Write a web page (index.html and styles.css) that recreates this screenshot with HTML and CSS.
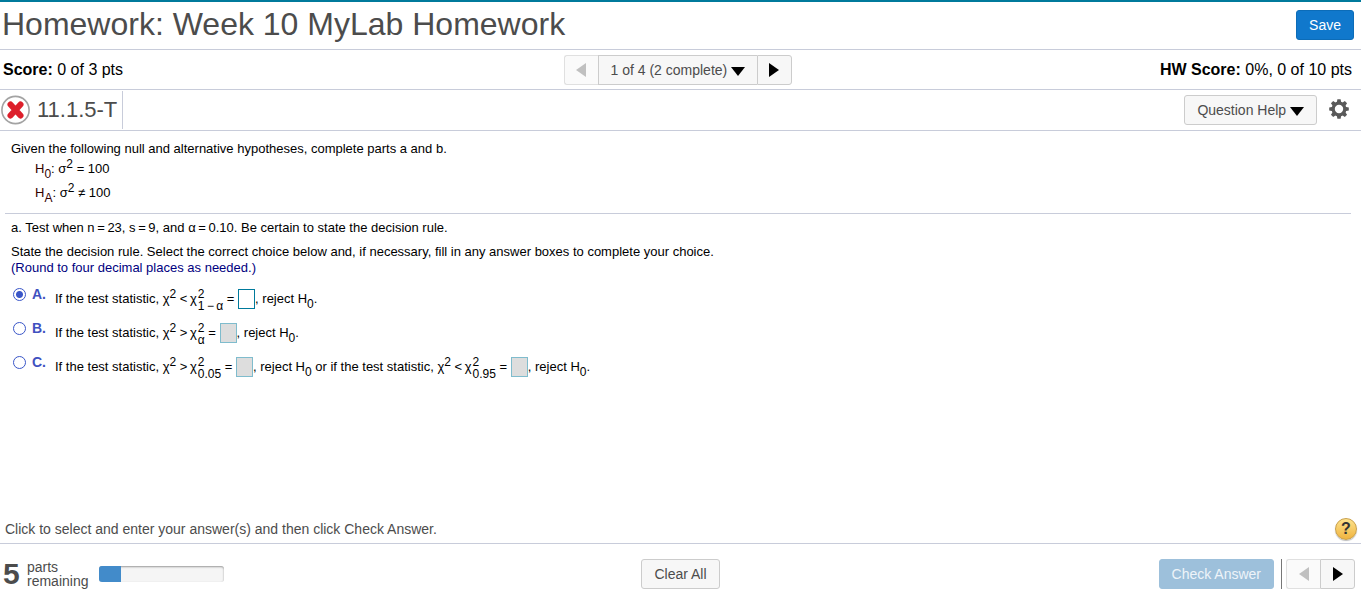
FILE: index.html
```html
<!DOCTYPE html>
<html lang="en">
<head>
<meta charset="utf-8">
<title>Homework: Week 10 MyLab Homework</title>
<link rel="stylesheet" href="styles.css">
</head>

<body>
<header class="title-bar">
  <h1>Homework: Week 10 MyLab Homework</h1>
  <button type="button" class="btn btn-primary">Save</button>
</header>

<div class="score-bar">
  <div><b>Score:</b> 0 of 3 pts</div>
  <nav class="btn-group">
    <button type="button" class="btn arrow" aria-label="Previous question" disabled>
      <svg width="10" height="14" viewBox="0 0 10 14"><path d="M10 0v14L0 7z"/></svg>
    </button>
    <span class="picker">
      <select class="btn" aria-label="Question">
        <option>1 of 4 (2 complete)</option>
      </select>
      <svg class="caret" width="14" height="9" viewBox="0 0 14 9"><path d="M0 0h14L7 9z"/></svg>
    </span>
    <button type="button" class="btn arrow" aria-label="Next question">
      <svg width="10" height="14" viewBox="0 0 10 14"><path d="M0 0v14l10-7z"/></svg>
    </button>
  </nav>
  <div class="hw-score"><b>HW Score:</b> 0%, 0 of 10 pts</div>
</div>

<div class="question-bar">
  <h2>
    <svg width="30" height="30" viewBox="0 0 30 30" role="img" aria-label="Incorrect">
      <circle cx="15.5" cy="15" r="13.6" fill="#fff" stroke="#a3a3a3" stroke-width="1.6"/>
      <path d="M10.5 9.5l10 11M20.5 9.5l-10 11" fill="none" stroke="#dd1f2b" stroke-width="6" stroke-linecap="round"/>
    </svg>
    11.1.5-T
  </h2>
  <div class="tools">
    <button type="button" class="btn">Question Help
      <svg width="14" height="9" viewBox="0 0 14 9"><path d="M0 0h14L7 9z"/></svg>
    </button>
    <button type="button" class="icon-btn" aria-label="Settings">
      <svg width="20" height="20" viewBox="-10 -10 20 20">
        <g fill="#5a5a5a">
          <path id="tooth" d="M-2.3-6L-1.6-9.8h3.2L2.3-6z"/>
          <use href="#tooth" transform="rotate(45)"/>
          <use href="#tooth" transform="rotate(90)"/>
          <use href="#tooth" transform="rotate(135)"/>
          <use href="#tooth" transform="rotate(180)"/>
          <use href="#tooth" transform="rotate(225)"/>
          <use href="#tooth" transform="rotate(270)"/>
          <use href="#tooth" transform="rotate(315)"/>
        </g>
        <circle r="5.8" fill="none" stroke="#5a5a5a" stroke-width="3.2"/>
      </svg>
    </button>
  </div>
</div>

<main>
  <section class="problem">
    <p>Given the following null and alternative hypotheses, complete parts a and b.</p>
    <p class="hypothesis"><span class="var">H<sub>0</sub></span>: σ<sup>2</sup> = 100</p>
    <p class="hypothesis"><span class="var">H<sub>A</sub></span>: σ<sup>2</sup> ≠ 100</p>
  </section>

  <section class="part">
    <p>a. Test when n&#8201;=&#8201;23, s&#8201;=&#8201;9, and α&#8201;=&#8201;0.10. Be certain to state the decision rule.</p>
    <p class="prompt">State the decision rule. Select the correct choice below and, if necessary, fill in any answer boxes to complete your choice.<br>
    <span class="note">(Round to four decimal places as needed.)</span></p>

    <div class="choice">
      <input type="radio" name="choice" id="choice-a" checked>
      <label for="choice-a">A.</label>
      <p>If the test statistic, χ<sup>2</sup> &lt;&#8201;χ<span class="scripts"><span>2</span><span>1&#8201;−&#8201;α</span></span> = <input type="text" class="answer" aria-label="Critical value">, reject H<sub>0</sub>.</p>
    </div>
    <div class="choice">
      <input type="radio" name="choice" id="choice-b">
      <label for="choice-b">B.</label>
      <p>If the test statistic, χ<sup>2</sup> &gt;&#8201;χ<span class="scripts"><span>2</span><span>α</span></span> = <input type="text" class="answer" aria-label="Critical value" disabled>, reject H<sub>0</sub>.</p>
    </div>
    <div class="choice">
      <input type="radio" name="choice" id="choice-c">
      <label for="choice-c">C.</label>
      <p>If the test statistic, χ<sup>2</sup> &gt;&#8201;χ<span class="scripts"><span>2</span><span>0.05</span></span> = <input type="text" class="answer" aria-label="Upper critical value" disabled>, reject H<sub>0</sub> or if the test statistic, χ<sup>2</sup> &lt;&#8201;χ<span class="scripts"><span>2</span><span>0.95</span></span> = <input type="text" class="answer" aria-label="Lower critical value" disabled>, reject H<sub>0</sub>.</p>
    </div>
  </section>
</main>

<div class="hint">
  <span>Click to select and enter your answer(s) and then click Check Answer.</span>
  <button type="button" class="help">?</button>
</div>

<footer>
  <div class="remaining">
    <b>5</b>
    <span id="parts">parts<br>remaining</span>
    <div class="progress" role="progressbar" aria-labelledby="parts" aria-valuenow="17" aria-valuemin="0" aria-valuemax="100">
      <div class="bar" style="width: 17%"></div>
    </div>
  </div>
  <button type="button" class="btn">Clear All</button>
  <div class="actions">
    <button type="button" class="btn btn-primary" disabled>Check Answer</button>
    <div class="btn-group">
      <button type="button" class="btn arrow" aria-label="Previous part" disabled>
        <svg width="10" height="14" viewBox="0 0 10 14"><path d="M10 0v14L0 7z"/></svg>
      </button>
      <button type="button" class="btn arrow" aria-label="Next part">
        <svg width="10" height="14" viewBox="0 0 10 14"><path d="M0 0v14l10-7z"/></svg>
      </button>
    </div>
  </div>
</footer>
</body>
</html>
```
FILE: styles.css
```css
* {
  box-sizing: border-box;
}

body {
  display: flex;
  flex-direction: column;
  min-height: 100vh;
  margin: 0;
  border-top: 2px solid #007a9c;
  background: #fff;
  color: #000;
  font-family: "Liberation Sans", Arial, sans-serif;
  font-size: 13px;
  line-height: 16px;
}

h1, h2, p {
  margin: 0;
  font-weight: normal;
}

button, select, input {
  font-family: inherit;
}

/* buttons */

.btn {
  height: 30px;
  padding: 0 12px;
  border: 1px solid #ccc;
  border-radius: 3px;
  background: #f7f7f7;
  color: #4c4c4c;
  font-size: 14px;
}

.btn svg {
  fill: #000;
  vertical-align: -1px;
}

.btn-primary {
  border-color: #0c6cb8;
  background: #1078cc;
  color: #fff;
}

.btn-primary:disabled {
  border-color: #9dc0db;
  background: #9dc0db;
  color: #eef4f9;
}

.btn-group {
  display: flex;
}

.btn-group .btn {
  border-radius: 0;
}

.btn-group > :first-child {
  border-radius: 3px 0 0 3px;
  border-right: 0;
}

.btn-group > :last-child {
  border-radius: 0 3px 3px 0;
}

.arrow {
  display: flex;
  align-items: center;
  justify-content: center;
  width: 35px;
  padding: 0;
}

.arrow:disabled {
  width: 34px;
  border-color: #e0e0e0;
  background: #fafafa;
}

.arrow:disabled svg {
  fill: #c0c0c0;
}

.picker {
  position: relative;
}

.picker .btn {
  appearance: none;
  width: 159px;
  border-right: 0;
}

.caret {
  position: absolute;
  top: 12px;
  right: 12px;
  pointer-events: none;
}

/* top bars */

.title-bar {
  display: flex;
  align-items: center;
  justify-content: space-between;
  height: 48px;
  padding: 0 7px 2px 2px;
  border-bottom: 1px solid #c8ccda;
}

.title-bar h1 {
  color: #4c4c4c;
  font-size: 32px;
  line-height: 40px;
  padding-bottom: 2px;
}

.score-bar {
  display: grid;
  grid-template-columns: 1fr auto 1fr;
  align-items: center;
  height: 40px;
  padding: 0 9px 0 3px;
  border-bottom: 1px solid #c8ccda;
  font-size: 16px;
}

.hw-score {
  text-align: right;
}

.question-bar {
  display: flex;
  align-items: center;
  justify-content: space-between;
  height: 41px;
  padding-right: 12px;
  border-bottom: 1px solid #c8ccda;
}

.question-bar h2 {
  display: flex;
  align-items: center;
  gap: 7px;
  height: 38px;
  padding-right: 5px;
  border-right: 1px solid #c8ccda;
  color: #4c4c4c;
  font-size: 22px;
}

.tools {
  display: flex;
  align-items: center;
  gap: 12px;
}

.icon-btn {
  display: flex;
  padding: 0 0 2px;
  border: 0;
  background: none;
}

/* question */

main {
  flex: 1;
  padding: 10px 10px 0 5px;
}

.problem {
  padding: 0 6px 8px;
  border-bottom: 1px solid #c8ccda;
}

.hypothesis {
  padding-left: 24px;
  line-height: 24px;
}

.var {
  color: #300;
}

sup, sub {
  font-size: 12px;
  line-height: 0;
}

sup {
  vertical-align: 5px;
}

sub {
  vertical-align: -5px;
}

.part {
  padding: 6px;
}

.prompt {
  padding: 8px 0 10px;
}

.note {
  color: #000080;
}

.choice {
  display: flex;
  align-items: flex-start;
  height: 34px;
}

.choice input[type="radio"] {
  width: 13px;
  height: 13px;
  margin: 2px 6px 0 2px;
  border: 1px solid #3a56c8;
  border-radius: 50%;
  background: #fff;
  appearance: none;
}

.choice input[type="radio"]:checked {
  background: radial-gradient(#3a56c8 3px, #fff 4px);
}

.choice label {
  width: 23px;
  color: #3f51c0;
  font-size: 14px;
  font-weight: bold;
}

.choice p {
  padding-top: 1px;
  line-height: 24px;
}

.scripts {
  display: inline-flex;
  flex-direction: column;
  margin-left: 1px;
  vertical-align: 5px;
  font-size: 12px;
  line-height: 12px;
}

.answer {
  width: 17px;
  height: 20px;
  padding: 0;
  border: 1px solid #007a9c;
  background: #fff;
  vertical-align: 0;
}

.answer:disabled {
  border-color: #7fbccd;
  background: #ddd;
}

/* bottom bars */

.hint {
  display: flex;
  align-items: center;
  justify-content: space-between;
  height: 30px;
  padding: 0 4px 0 5px;
  border-bottom: 1px solid #c8ccda;
  color: #4c4c4c;
  font-size: 14px;
}

.help {
  width: 22px;
  height: 22px;
  padding: 0;
  border: 1px solid #c9a04a;
  border-radius: 50%;
  background: linear-gradient(#fde28c, #f0b440);
  box-shadow: 0 1px 1px #bbb;
  color: #333;
  font-size: 16px;
  font-weight: bold;
}

footer {
  display: grid;
  grid-template-columns: 1fr auto 1fr;
  align-items: center;
  height: 60px;
  padding: 0 6px;
  color: #4c4c4c;
}

.remaining {
  display: flex;
  align-items: center;
  margin-left: -3px;
  font-size: 14px;
  line-height: 14px;
}

.remaining b {
  width: 24px;
  font-size: 30px;
}

.progress {
  width: 125px;
  height: 16px;
  margin-left: 11px;
  overflow: hidden;
  border-radius: 3px;
  background: #f5f5f5;
  box-shadow: inset 0 1px 2px #999;
}

.bar {
  height: 100%;
  background: #428bca;
}

.actions {
  display: flex;
  justify-content: flex-end;
  gap: 7px;
}

.actions .btn-group {
  padding-left: 4px;
  border-left: 1px solid #777;
}
```
